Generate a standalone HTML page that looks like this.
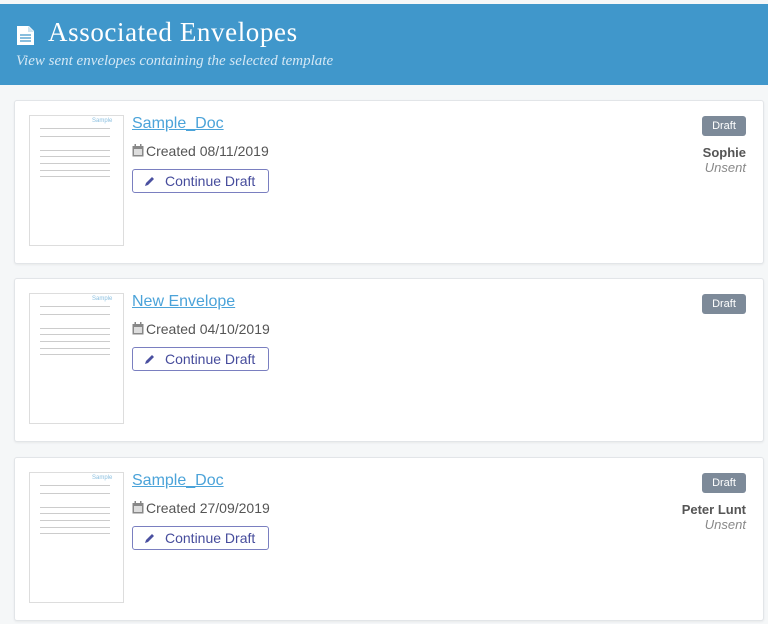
<!DOCTYPE html>
<html><head><style>
body{margin:0;width:768px;height:624px;background:#f5f7f8;font-family:"Liberation Sans",sans-serif;overflow:hidden;position:relative}
.hdr{position:absolute;left:0;top:4px;width:768px;height:81px;background:#4097cb;color:#fff}
.hdr h1{position:absolute;left:48px;top:13px;margin:0;font:400 27px "Liberation Serif",serif;letter-spacing:0.6px}
.hdr .sub{position:absolute;left:16px;top:49px;font:italic 15px "Liberation Serif",serif;color:#d4e8f5}
.ico{position:absolute;left:17px;top:21px;width:17px;height:21px}
.card{position:absolute;left:14px;width:748px;height:162px;background:#fff;border:1px solid #e2e5e8;border-radius:3px;box-shadow:0 1px 2px rgba(0,0,0,.06)}
.thumb{position:absolute;left:14px;top:14px;width:93px;height:129px;border:1px solid #ddd}
.thumb i{position:absolute;left:10px;height:1px;background:#ccc;width:70px}
.t{position:absolute;left:117px;top:14px;font-size:16px;color:#4ba3d9;text-decoration:underline}
.c{position:absolute;left:117px;top:42px;font-size:14px;color:#555}
.c svg{vertical-align:-1px;margin-right:2px}
.btn{position:absolute;left:117px;top:68px;width:135px;height:22px;border:1px solid #7a7fc0;border-radius:3px;color:#464c9c;font-size:14px;line-height:22px}
.btn span{position:absolute;left:32px}
.badge{position:absolute;right:17px;top:15px;width:44px;height:20px;background:#7d8a99;color:#fff;font-size:11px;text-align:center;line-height:20px;border-radius:3px}
.nm{position:absolute;right:17px;top:44px;font-size:13px;font-weight:bold;color:#555;text-align:right}
.us{position:absolute;right:17px;top:59px;font-size:13px;font-style:italic;color:#888}
</style></head><body>
<div class="hdr">
<svg class="ico" viewBox="0 0 17 21"><path d="M0 1v19h17V6l-5-5z" fill="#fff"/><path d="M11 1v6h6" fill="#cfe3f0"/><path d="M3 10h11M3 13h11M3 16h11" stroke="#4097cb" stroke-width="1.3"/></svg>
<h1>Associated Envelopes</h1>
<div class="sub">View sent envelopes containing the selected template</div>
</div>

<div class="card" style="top:100px">
<div class="thumb"><b style="position:absolute;left:62px;top:2px;font-size:6px;color:#8cc0e0;font-weight:normal">Sample</b><i style="top:12px"></i><i style="top:20px"></i><i style="top:34px"></i><i style="top:40px"></i><i style="top:47px"></i><i style="top:54px"></i><i style="top:60px"></i></div>
<div class="t">Sample_Doc</div>
<div class="c"><svg width="12" height="13" viewBox="0 0 12 13"><rect x="0.5" y="2" width="11" height="10.5" fill="#888"/><rect x="2" y="5" width="8" height="6" fill="#ddd"/><rect x="2.5" y="0" width="1.5" height="3" fill="#888"/><rect x="8" y="0" width="1.5" height="3" fill="#888"/></svg>Created 08/11/2019</div>
<div class="btn"><svg style="position:absolute;left:11px;top:5px" width="12" height="12" viewBox="0 0 12 12"><path d="M1 11l1-3 6-6 2 2-6 6z" fill="#4a50a0"/></svg><span>Continue Draft</span></div>
<div class="badge">Draft</div><div class="nm">Sophie</div><div class="us">Unsent</div>
</div>

<div class="card" style="top:278px">
<div class="thumb"><b style="position:absolute;left:62px;top:2px;font-size:6px;color:#8cc0e0;font-weight:normal">Sample</b><i style="top:12px"></i><i style="top:20px"></i><i style="top:34px"></i><i style="top:40px"></i><i style="top:47px"></i><i style="top:54px"></i><i style="top:60px"></i></div>
<div class="t">New Envelope</div>
<div class="c"><svg width="12" height="13" viewBox="0 0 12 13"><rect x="0.5" y="2" width="11" height="10.5" fill="#888"/><rect x="2" y="5" width="8" height="6" fill="#ddd"/><rect x="2.5" y="0" width="1.5" height="3" fill="#888"/><rect x="8" y="0" width="1.5" height="3" fill="#888"/></svg>Created 04/10/2019</div>
<div class="btn"><svg style="position:absolute;left:11px;top:5px" width="12" height="12" viewBox="0 0 12 12"><path d="M1 11l1-3 6-6 2 2-6 6z" fill="#4a50a0"/></svg><span>Continue Draft</span></div>
<div class="badge">Draft</div>
</div>

<div class="card" style="top:457px">
<div class="thumb"><b style="position:absolute;left:62px;top:2px;font-size:6px;color:#8cc0e0;font-weight:normal">Sample</b><i style="top:12px"></i><i style="top:20px"></i><i style="top:34px"></i><i style="top:40px"></i><i style="top:47px"></i><i style="top:54px"></i><i style="top:60px"></i></div>
<div class="t">Sample_Doc</div>
<div class="c"><svg width="12" height="13" viewBox="0 0 12 13"><rect x="0.5" y="2" width="11" height="10.5" fill="#888"/><rect x="2" y="5" width="8" height="6" fill="#ddd"/><rect x="2.5" y="0" width="1.5" height="3" fill="#888"/><rect x="8" y="0" width="1.5" height="3" fill="#888"/></svg>Created 27/09/2019</div>
<div class="btn"><svg style="position:absolute;left:11px;top:5px" width="12" height="12" viewBox="0 0 12 12"><path d="M1 11l1-3 6-6 2 2-6 6z" fill="#4a50a0"/></svg><span>Continue Draft</span></div>
<div class="badge">Draft</div><div class="nm">Peter Lunt</div><div class="us">Unsent</div>
</div>
</body></html>
